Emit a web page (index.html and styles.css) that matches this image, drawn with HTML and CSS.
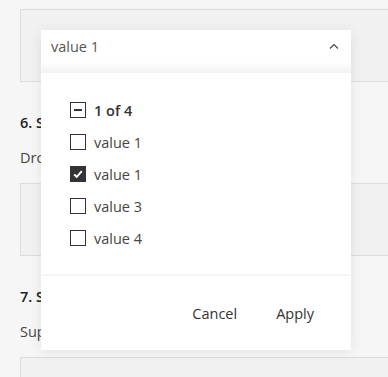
FILE: index.html
```html
<!DOCTYPE html>
<html lang="en">

<head>
    <meta charset="UTF-8">
    <meta name="viewport" content="width=device-width, initial-scale=1.0">
    <title>Multi select</title>
    <link rel="stylesheet" href="styles.css">
</head>

<body>
    <div class="page">
        <div class="demo-box"></div>

        <h3 class="demo-title">6. Select</h3>
        <p class="demo-text">Dropdown</p>
        <div class="demo-box"></div>

        <h3 class="demo-title">7. State</h3>
        <p class="demo-text">Support</p>
        <div class="demo-box demo-box-last"></div>
    </div>

    <div class="dropdown">
        <div class="dropdown-header">
            <span>value 1</span>
            <svg class="chevron" width="10" height="6" viewBox="0 0 10 6">
                <path d="M1 5.5 L5 1.5 L9 5.5" fill="none" stroke="#444" stroke-width="1.1" />
            </svg>
        </div>

        <ul class="dropdown-list">
            <li class="option option-all">
                <span class="checkbox indeterminate"></span>
                <span>1 of 4</span>
            </li>
            <li class="option">
                <span class="checkbox"></span>
                <span>value 1</span>
            </li>
            <li class="option">
                <span class="checkbox checked">
                    <svg width="12" height="12" viewBox="0 0 12 12">
                        <path d="M2.2 6.4 L4.8 8.8 L9.8 3.2" fill="none" stroke="#fff" stroke-width="2" />
                    </svg>
                </span>
                <span>value 1</span>
            </li>
            <li class="option">
                <span class="checkbox"></span>
                <span>value 3</span>
            </li>
            <li class="option">
                <span class="checkbox"></span>
                <span>value 4</span>
            </li>
        </ul>

        <div class="dropdown-footer">
            <button class="footer-btn">Cancel</button>
            <button class="footer-btn">Apply</button>
        </div>
    </div>
</body>

</html>
```

FILE: styles.css
```css
body {
    margin: 0;
    font-family: "Open Sans", "Liberation Sans", sans-serif;
    font-size: 14.5px;
    background-color: #f6f6f6;
    color: #333;
    overflow: hidden;
}

.page {
    padding: 9px 0 0 20px;
}

.demo-box {
    height: 71px;
    background-color: #f1f1f1;
    border: 1px solid #dcdcdc;
    border-right: none;
}

.demo-box-last {
    height: 19px;
    border-bottom: none;
}

.demo-title {
    margin: 31px 0 0 0;
    font-size: 14.5px;
    line-height: 20px;
    font-weight: 600;
    color: #222;
}

.demo-text {
    margin: 15px 0 15px 0;
    line-height: 20px;
    color: #444;
}

/* popup, sits over the page */
.dropdown {
    position: absolute;
    top: 30px;
    left: 41px;
    width: 310px;
    background: white;
    box-shadow: 0 2px 12px rgba(0, 0, 0, 0.08);
}

.dropdown-header {
    height: 43px;
    padding: 7px 12px 0 10px;
    box-sizing: border-box;
    display: flex;
    justify-content: space-between;
    align-items: flex-start;
    line-height: 20px;
    color: #555;
    background: linear-gradient(to bottom, #fff 0, #fff 32px, #f2f2f2 43px);
}

.chevron {
    margin-top: 6px;
}

.dropdown-list {
    list-style: none;
    margin: 0 1px;
    padding: 21px 0 20px 0;
    border-bottom: 2px solid #f5f5f5;
}

.option {
    height: 32px;
    display: flex;
    align-items: center;
    gap: 8px;
    padding-left: 28px;
    color: #444;
}

.option-all {
    font-weight: 600;
    color: #333;
}

.checkbox {
    width: 16px;
    height: 16px;
    box-sizing: border-box;
    border: 1px solid #333;
    display: flex;
    align-items: center;
    justify-content: center;
}

.checkbox.indeterminate {
    border-width: 1.5px;
}

.checkbox.indeterminate::after {
    content: "";
    width: 8px;
    height: 2px;
    background-color: #333;
}

.checkbox.checked {
    background-color: #333;
}

.dropdown-footer {
    height: 74px;
    display: flex;
    justify-content: flex-end;
    align-items: center;
    gap: 15px;
    padding-right: 25px;
}

.footer-btn {
    font-family: inherit;
    font-size: 14.5px;
    color: #333;
    background: none;
    border: none;
    padding: 8px 12px;
    cursor: pointer;
}
```
